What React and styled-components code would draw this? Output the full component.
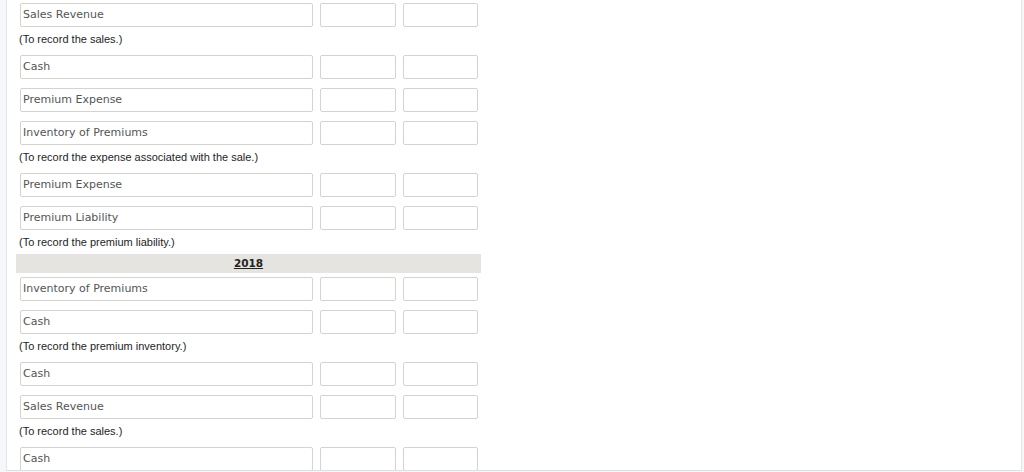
import React from 'react'
import styled, { createGlobalStyle } from 'styled-components'

const GlobalStyle = createGlobalStyle`
  html, body {
    margin: 0;
    padding: 0;
    background: #f5f7f9;
    overflow: hidden;
  }
  body {
    font-family: Tahoma, "DejaVu Sans", sans-serif;
  }
`

const Panel = styled.div`
  margin: 0 2px 0 6px;
  height: 471px;
  background: #fff;
  border-left: 1px solid #e3e7eb;
  border-right: 1px solid #e3e7eb;
  border-bottom: 1px solid #dde1e5;
  box-sizing: border-box;
  overflow: hidden;
`

const Sheet = styled.div`
  width: 465px;
  margin: -1.5px 0 0 9px;
`

const EntryRow = styled.div`
  display: flex;
  align-items: center;
  height: 33px;
  padding-left: 4px;
  box-sizing: border-box;
`

const Field = styled.div`
  box-sizing: border-box;
  height: 24px;
  width: ${p => p.$w}px;
  margin-right: ${p => p.$gap || 0}px;
  border: 1px solid #d4d3cf;
  border-radius: 2px;
  background: #fff;
  color: #555;
  font-family: "DejaVu Sans", Verdana, sans-serif;
  font-size: 11px;
  line-height: 21px;
  padding-left: 2px;
  white-space: nowrap;
`

const Note = styled.div`
  height: 19px;
  padding: 1.5px 0 0 3px;
  box-sizing: border-box;
  font-family: "Liberation Sans", Arial, sans-serif;
  font-size: 11px;
  color: #1e1e1e;
  line-height: 13px;
`

const YearBand = styled.div`
  height: 19px;
  background: #e5e4e0;
  text-align: center;
  font-family: "DejaVu Sans", Verdana, sans-serif;
  font-weight: bold;
  font-size: 10.5px;
  line-height: 19px;
  color: #222;
  span {
    text-decoration: underline;
  }
`

const Entry = ({ account }) => (
  <EntryRow>
    <Field $w={293} $gap={7}>{account}</Field>
    <Field $w={76} $gap={7} />
    <Field $w={75} />
  </EntryRow>
)

const rows = [
  ['e', 'Sales Revenue'],
  ['n', '(To record the sales.)'],
  ['e', 'Cash'],
  ['e', 'Premium Expense'],
  ['e', 'Inventory of Premiums'],
  ['n', '(To record the expense associated with the sale.)'],
  ['e', 'Premium Expense'],
  ['e', 'Premium Liability'],
  ['n', '(To record the premium liability.)'],
  ['y', '2018'],
  ['e', 'Inventory of Premiums'],
  ['e', 'Cash'],
  ['n', '(To record the premium inventory.)'],
  ['e', 'Cash'],
  ['e', 'Sales Revenue'],
  ['n', '(To record the sales.)'],
  ['e', 'Cash'],
]

export default function App() {
  return (
    <>
      <GlobalStyle />
      <Panel>
        <Sheet>
          {rows.map(([kind, text], i) => {
            if (kind === 'n') return <Note key={i}>{text}</Note>
            if (kind === 'y') return <YearBand key={i}><span>{text}</span></YearBand>
            return <Entry key={i} account={text} />
          })}
        </Sheet>
      </Panel>
    </>
  )
}
